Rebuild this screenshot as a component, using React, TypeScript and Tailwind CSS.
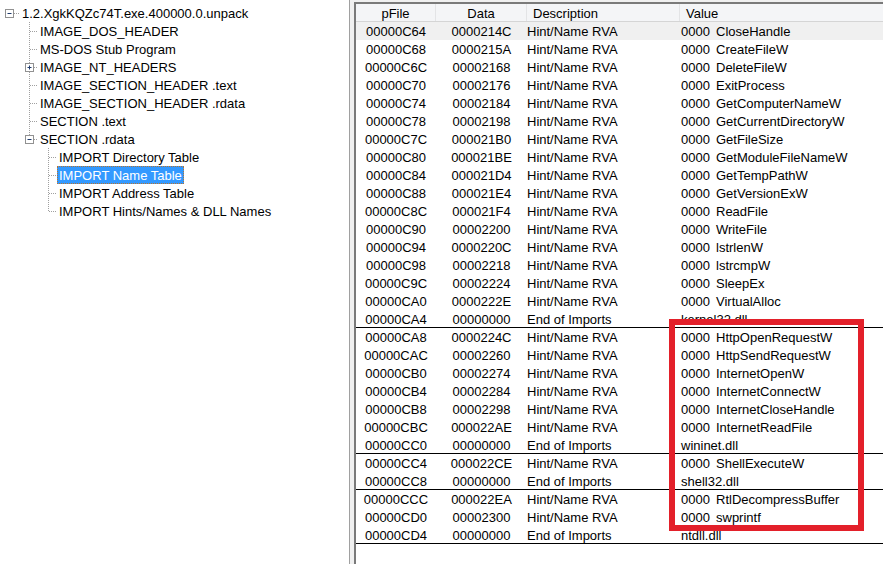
const groups: { dll: string; imports: [string, string][] }[] = [
  {
    dll: 'kernel32.dll',
    imports: [
      ['0000214C', 'CloseHandle'],
      ['0000215A', 'CreateFileW'],
      ['00002168', 'DeleteFileW'],
      ['00002176', 'ExitProcess'],
      ['00002184', 'GetComputerNameW'],
      ['00002198', 'GetCurrentDirectoryW'],
      ['000021B0', 'GetFileSize'],
      ['000021BE', 'GetModuleFileNameW'],
      ['000021D4', 'GetTempPathW'],
      ['000021E4', 'GetVersionExW'],
      ['000021F4', 'ReadFile'],
      ['00002200', 'WriteFile'],
      ['0000220C', 'lstrlenW'],
      ['00002218', 'lstrcmpW'],
      ['00002224', 'SleepEx'],
      ['0000222E', 'VirtualAlloc'],
    ],
  },
  {
    dll: 'wininet.dll',
    imports: [
      ['0000224C', 'HttpOpenRequestW'],
      ['00002260', 'HttpSendRequestW'],
      ['00002274', 'InternetOpenW'],
      ['00002284', 'InternetConnectW'],
      ['00002298', 'InternetCloseHandle'],
      ['000022AE', 'InternetReadFile'],
    ],
  },
  {
    dll: 'shell32.dll',
    imports: [['000022CE', 'ShellExecuteW']],
  },
  {
    dll: 'ntdll.dll',
    imports: [
      ['000022EA', 'RtlDecompressBuffer'],
      ['00002300', 'swprintf'],
    ],
  },
]

type Row = { pFile: string; data: string; desc: string; hint?: string; value: string; end: boolean }

const rows: Row[] = []
let offset = 0xc64
for (const g of groups) {
  for (const [data, name] of g.imports) {
    rows.push({ pFile: offset.toString(16).toUpperCase().padStart(8, '0'), data, desc: 'Hint/Name RVA', hint: '0000', value: name, end: false })
    offset += 4
  }
  rows.push({ pFile: offset.toString(16).toUpperCase().padStart(8, '0'), data: '00000000', desc: 'End of Imports', value: g.dll, end: true })
  offset += 4
}

type Gutter = { w: number; kind: 'none' | 'root' | 'tee' | 'ell'; box?: '+' | '-' }

const tree: { label: string; gutters: Gutter[]; selected?: boolean }[] = [
  { label: '1.2.XgkKQZc74T.exe.400000.0.unpack', gutters: [{ w: 20, kind: 'root', box: '-' }] },
  { label: 'IMAGE_DOS_HEADER', gutters: [{ w: 20, kind: 'none' }, { w: 18, kind: 'tee' }] },
  { label: 'MS-DOS Stub Program', gutters: [{ w: 20, kind: 'none' }, { w: 18, kind: 'tee' }] },
  { label: 'IMAGE_NT_HEADERS', gutters: [{ w: 20, kind: 'none' }, { w: 18, kind: 'tee', box: '+' }] },
  { label: 'IMAGE_SECTION_HEADER .text', gutters: [{ w: 20, kind: 'none' }, { w: 18, kind: 'tee' }] },
  { label: 'IMAGE_SECTION_HEADER .rdata', gutters: [{ w: 20, kind: 'none' }, { w: 18, kind: 'tee' }] },
  { label: 'SECTION .text', gutters: [{ w: 20, kind: 'none' }, { w: 18, kind: 'tee' }] },
  { label: 'SECTION .rdata', gutters: [{ w: 20, kind: 'none' }, { w: 18, kind: 'ell', box: '-' }] },
  { label: 'IMPORT Directory Table', gutters: [{ w: 20, kind: 'none' }, { w: 18, kind: 'none' }, { w: 19, kind: 'tee' }] },
  { label: 'IMPORT Name Table', selected: true, gutters: [{ w: 20, kind: 'none' }, { w: 18, kind: 'none' }, { w: 19, kind: 'tee' }] },
  { label: 'IMPORT Address Table', gutters: [{ w: 20, kind: 'none' }, { w: 18, kind: 'none' }, { w: 19, kind: 'tee' }] },
  { label: 'IMPORT Hints/Names & DLL Names', gutters: [{ w: 20, kind: 'none' }, { w: 18, kind: 'none' }, { w: 19, kind: 'ell' }] },
]

function TreeGutter({ g }: { g: Gutter }) {
  const cx = g.kind === 'root' ? 9 : g.w === 19 ? 10 : 9
  return (
    <svg width={g.w} height={18} className="shrink-0">
      {(g.kind === 'tee' || g.kind === 'ell') && (
        <line x1={cx + 0.5} y1={0} x2={cx + 0.5} y2={g.kind === 'tee' ? 18 : 10} stroke="#a0a0a0" strokeDasharray="1 1" />
      )}
      {g.kind !== 'none' && (
        <line x1={cx + 1} y1={9.5} x2={g.w} y2={9.5} stroke="#a0a0a0" strokeDasharray="1 1" />
      )}
      {g.box && (
        <g>
          <rect x={cx - 3.5} y={5.5} width={8} height={8} fill="#ffffff" stroke="#919191" />
          <line x1={cx - 1.5} y1={9.5} x2={cx + 2.5} y2={9.5} stroke="#1f3a6b" />
          {g.box === '+' && <line x1={cx + 0.5} y1={7.5} x2={cx + 0.5} y2={11.5} stroke="#1f3a6b" />}
        </g>
      )}
    </svg>
  )
}

export default function App() {
  return (
    <div className="relative flex w-[883px] h-[564px] overflow-hidden bg-white text-[13px] text-black font-['Liberation_Sans',Arial,sans-serif]">
      {/* tree pane */}
      <div className="w-[350px] shrink-0 border-r border-[#a0a0a0] pt-[4px]">
        {tree.map((t) => (
          <div key={t.label} className="flex h-[18px] items-center">
            {t.gutters.map((g, i) => (
              <TreeGutter key={i} g={g} />
            ))}
            <span
              className={
                t.selected
                  ? 'h-[18px] leading-[18px] whitespace-nowrap border border-dotted border-[#b8742f] bg-[#3399ff] px-px text-white'
                  : 'h-[18px] leading-[18px] whitespace-nowrap border border-transparent px-px'
              }
            >
              {t.label}
            </span>
          </div>
        ))}
      </div>

      {/* splitter */}
      <div className="w-[4px] shrink-0 bg-[#f0f0f0]" />

      {/* list pane */}
      <div className="flex-1 flex flex-col bg-[#f0f0f0] pt-[2px]">
        <div className="flex-1 flex flex-col bg-white border-t-2 border-l-2 border-[#7a7a7a]">
          <div className="flex h-[18px] shrink-0 border-b border-[#d5d5d5] bg-[#f4f5f7] leading-[19px]">
            <div className="w-[80px] text-center border-r border-[#e3e4e6]">pFile</div>
            <div className="w-[91px] text-center border-r border-[#e3e4e6]">Data</div>
            <div className="w-[153px] pl-[6px] border-r border-[#e3e4e6]">Description</div>
            <div className="flex-1 pl-[6px]">Value</div>
          </div>
          {rows.map((r, i) => (
            <div
              key={r.pFile}
              className={`flex h-[18px] shrink-0 leading-[19px] whitespace-nowrap ${r.end ? 'border-b border-black' : ''} ${i === 0 ? 'bg-[#f0f0f0]' : ''}`}
            >
              <div className="w-[80px] text-center">{r.pFile}</div>
              <div className="w-[91px] text-center">{r.data}</div>
              <div className="w-[153px]">{r.desc}</div>
              <div className="flex-1 flex pl-[1px]">
                {r.hint && <span className="w-[35px]">{r.hint}</span>}
                <span>{r.value}</span>
              </div>
            </div>
          ))}
        </div>
      </div>

      {/* annotation box */}
      <div className="absolute left-[669px] top-[319px] w-[195px] h-[212px] border-[6px] border-[#e3202a] pointer-events-none" />
    </div>
  )
}
